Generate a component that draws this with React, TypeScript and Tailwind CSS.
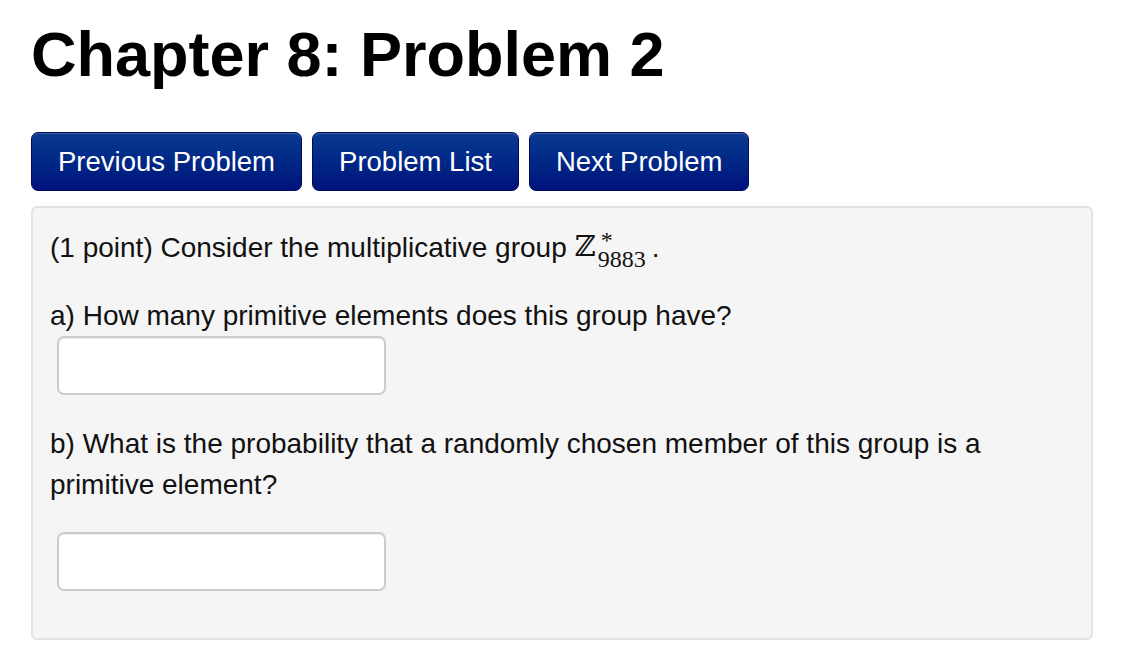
import React from 'react';

const NavButton: React.FC<{ label: string }> = ({ label }) => (
  <button className="h-[59px] px-[26px] rounded-[7px] border border-[#000a5c] bg-linear-to-b from-[#0c3a90] to-[#00107c] text-white text-[27.5px] leading-none shadow-[inset_0_1px_0_rgba(255,255,255,0.2)]">
    {label}
  </button>
);

const AnswerBox: React.FC = () => (
  <input
    type="text"
    className="block ml-[7px] w-[329px] h-[59px] rounded-[7px] border-2 border-[#cccccc] bg-white shadow-[inset_0_1px_1px_rgba(0,0,0,0.075)] outline-none"
  />
);

const App: React.FC = () => {
  return (
    <div className="min-h-screen bg-white text-[#111] pl-[31px] pr-[41px] font-['Liberation_Sans',Arial,sans-serif]">
      <h1 className="pt-[18px] text-[63px] leading-[72px] font-bold text-black">Chapter 8: Problem 2</h1>

      <div className="mt-[42px] flex gap-[10px]">
        <NavButton label="Previous Problem" />
        <NavButton label="Problem List" />
        <NavButton label="Next Problem" />
      </div>

      <div className="mt-[15px] w-[1062px] rounded-[6px] border-2 border-[#e3e3e3] bg-[#f5f5f5] px-[17px] pt-[19px] pb-[47px] text-[28px] leading-[41px]">
        <p className="h-[41px] flex items-start">
          <span>(1 point) Consider the multiplicative group&nbsp;</span>
          <span className="inline-flex items-start font-['DejaVu_Serif','Liberation_Serif',serif] leading-none">
            <span className="text-[29px] mt-[5px]">ℤ</span>
            <span className="flex flex-col font-['Liberation_Serif',serif] leading-none ml-[2px] mt-[6px]">
              <span className="text-[24px] h-[14px] leading-[14px] pl-[3px]">*</span>
              <span className="text-[24px]">9883</span>
            </span>
          </span>
          <span className="ml-[6px]">.</span>
        </p>

        <p className="mt-[27px]">a) How many primitive elements does this group have?</p>
        <AnswerBox />

        <p className="mt-[28px]">
          b) What is the probability that a randomly chosen member of this group is a
          <br />
          primitive element?
        </p>
        <div className="mt-[27px]">
          <AnswerBox />
        </div>
      </div>
    </div>
  );
};

export default App;
